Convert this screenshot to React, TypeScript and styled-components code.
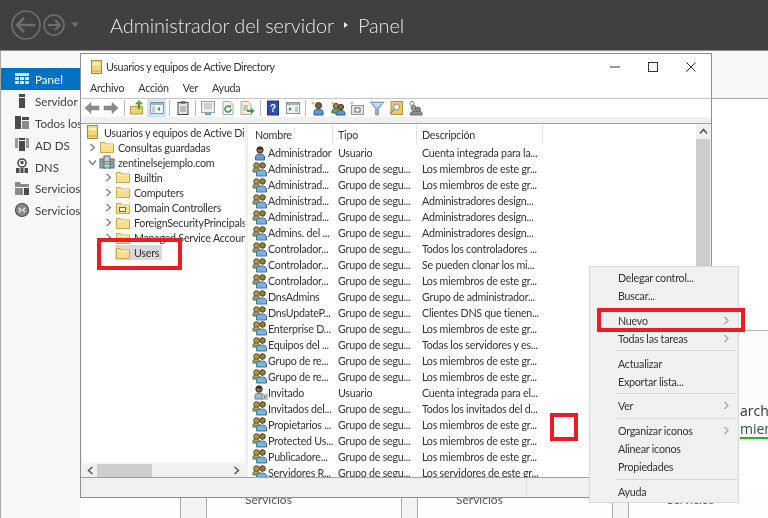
import React from "react";
import styled, { createGlobalStyle } from "styled-components";

const Global = createGlobalStyle`
  html, body { margin: 0; padding: 0; background: #fff; overflow: hidden; }
  * { box-sizing: border-box; }
`;

const UI = `"Lato", "Open Sans", sans-serif`;

const Page = styled.div`
  width: 768px;
  height: 518px;
  position: relative;
  overflow: hidden;
  background: #fff;
  font-family: ${UI};
  font-size: 10.7px;
  letter-spacing: -0.23px;
  color: #333;
  filter: blur(0.3px);
`;
const Header = styled.header`
  height: 51px;
  background: #404040;
  border-bottom: 1px solid #8c8c8c;
  display: flex;
  align-items: center;
`;
const NavSvg = styled.svg`
  flex: none;
  margin-left: 8px;
  margin-right: 26px;
`;
const Crumb = styled.div`
  display: flex;
  align-items: center;
  color: #e8e8e8;
  font-size: 20px;
  font-weight: 300;
  letter-spacing: -0.12px;
  gap: 9px;
`;
const CrumbArrow = styled.span`
  width: 0;
  height: 0;
  border-left: 4px solid #e8e8e8;
  border-top: 3.5px solid transparent;
  border-bottom: 3.5px solid transparent;
  margin-left: 1px;
  margin-right: 1px;
`;
const Body = styled.div`
  display: flex;
  height: 467px;
`;
const Sidebar = styled.nav`
  width: 80px;
  flex: none;
  background: #f8f8f8;
  border-left: 1px solid #a8a8a8;
  padding-top: 17px;
`;
const SideItem = styled.div<{ $active?: boolean }>`
  height: 21.8px;
  display: flex;
  align-items: center;
  gap: 5px;
  padding-left: 13px;
  white-space: nowrap;
  font-size: 11.6px;
  letter-spacing: 0;
  background: ${(p) => (p.$active ? "#0072c6" : "transparent")};
  color: ${(p) => (p.$active ? "#fff" : "#404040")};
  overflow: hidden;
  svg { flex: none; }
`;
const SideLabel = styled.span`
  padding-top: 2px;
`;
const Main = styled.main`
  flex: 1;
  min-width: 0;
  display: flex;
  flex-direction: column;
  overflow: hidden;
`;
const TopStrip = styled.div`
  height: 48px;
  flex: none;
  background: #f7f7f7;
  border-bottom: 1px solid #a8a8a8;
`;
const Content = styled.div`
  flex: 1;
  background: #fff;
  padding-top: 231px;
`;
const TaskPanel = styled.section`
  margin-left: auto;
  width: 200px;
  height: 112px;
  border-top: 1px solid #b5b5b5;
  background: #fbfbfb;
  padding: 71px 0 0 172px;
  font-family: "Open Sans", sans-serif;
  font-size: 14px;
  letter-spacing: 0;
  line-height: 18px;
  white-space: nowrap;
  overflow: hidden;
`;
const TaskTitle = styled.div`
  color: #333;
`;
const TaskLink = styled.div`
  color: #2c4f5a;
  border-bottom: 2px solid #1fb81f;
  height: 19px;
  width: 60px;
`;
const CardRow = styled.div`
  height: 30px;
  flex: none;
  display: flex;
  gap: 15px;
  background: #f4f4f4;
`;
const Card = styled.div<{ $w: number; $gap?: number }>`
  width: ${(p) => p.$w}px;
  flex: none;
  margin-right: ${(p) => p.$gap ?? 0}px;
  background: #fdfdfd;
  border-right: 1px solid #a8a8a8;
  border-left: ${(p) => (p.$gap ? "none" : "1px solid #a8a8a8")};
  padding: 4px 0 0 38px;
  font-size: 12px;
  letter-spacing: 0;
  line-height: 15px;
  color: #555;
`;

const Win = styled.div`
  position: absolute;
  left: 80px;
  top: 53px;
  width: 632px;
  height: 445px;
  background: #fff;
  border: 1px solid #8f8f8f;
  display: flex;
  flex-direction: column;
`;
const TitleBar = styled.div`
  height: 26px;
  flex: none;
  display: flex;
  align-items: center;
  padding-left: 8px;
  gap: 1px;
  color: #333;
`;
const TitleText = styled.div`
  flex: 1;
  padding-bottom: 1px;
  letter-spacing: -0.33px;
`;
const WinButton = styled.div`
  width: 38px;
  height: 26px;
  display: flex;
  align-items: center;
  justify-content: center;
`;
const WinButtons = styled.div`
  display: flex;
  margin-right: 1px;
`;
const MenuBar = styled.div`
  height: 19px;
  flex: none;
  display: flex;
  gap: 14px;
  padding: 0 0 3px 9px;
  align-items: center;
  border-bottom: 1px solid #c4c4c4;
  color: #333;
`;
const Toolbar = styled.div`
  height: 18px;
  flex: none;
  display: flex;
  align-items: center;
  padding-left: 1.3px;
`;
const ToolBtn = styled.div<{ $on?: boolean }>`
  width: 19.4px;
  height: 18px;
  display: flex;
  align-items: center;
  justify-content: center;
  background: ${(p) => (p.$on ? "#cce8ff" : "transparent")};
`;
const ToolSep = styled.div`
  width: 6.5px;
  height: 16px;
  display: flex;
  justify-content: center;
  &::after {
    content: "";
    width: 1px;
    background: #b8b8b8;
  }
`;
const Strip = styled.div`
  height: 7px;
  flex: none;
  background: #f0f0f0;
  border-bottom: 1px solid #a0a0a0;
`;
const Work = styled.div`
  flex: 1;
  min-height: 0;
  display: flex;
  gap: 3px;
  padding: 0 1px 0 1px;
  background: #f0f0f0;
  border-bottom: 1px solid #a0a0a0;
`;
const TreePane = styled.div`
  width: 163px;
  flex: none;
  background: #fff;
  display: flex;
  flex-direction: column;
  overflow: hidden;
`;
const Tree = styled.div`
  flex: 1;
  padding-top: 0.5px;
  overflow: hidden;
`;
const TreeRow = styled.div<{ $depth: number }>`
  height: 15.1px;
  display: flex;
  align-items: center;
  white-space: nowrap;
  padding-left: ${(p) => (p.$depth === 0 ? 3 : 3 + (p.$depth - 1) * 16)}px;
  svg { flex: none; }
`;
const Twist = styled.span`
  width: 14px;
  flex: none;
  display: flex;
  justify-content: center;
`;
const TreeEntry = styled.span<{ $sel?: boolean }>`
  display: flex;
  align-items: center;
  gap: 3px;
  height: 15px;
  padding-right: ${(p) => (p.$sel ? 3 : 0)}px;
  background: ${(p) => (p.$sel ? "#d9d9d9" : "transparent")};
`;
const HScroll = styled.div`
  height: 14px;
  flex: none;
  background: #f0f0f0;
  display: flex;
  align-items: center;
  padding-left: 5px;
`;
const HThumb = styled.div`
  width: 55px;
  height: 13px;
  margin-left: 3px;
  background: #cdcdcd;
`;
const HArrowRight = styled.div`
  margin-left: auto;
  margin-right: 5px;
  display: flex;
`;
const ListPane = styled.div`
  flex: 1;
  min-width: 0;
  background: #fff;
  display: flex;
  overflow: hidden;
`;
const ListBody = styled.div`
  flex: 1;
  min-width: 0;
  overflow: hidden;
`;
const HeaderRow = styled.div`
  height: 21px;
  display: grid;
  grid-template-columns: 85px 84px 126px;
`;
const HeadCell = styled.div<{ $first?: boolean }>`
  display: flex;
  align-items: center;
  padding-left: ${(p) => (p.$first ? 7 : 5)}px;
  border-right: 1px solid #e5e5e5;
`;
const Row = styled.div`
  height: 15.96px;
  display: grid;
  grid-template-columns: 85px 84px 1fr;
  align-items: center;
  white-space: nowrap;
`;
const NameCell = styled.div`
  display: flex;
  align-items: center;
  padding-left: 4px;
  overflow: hidden;
  svg { flex: none; }
`;
const Cell = styled.div`
  padding-left: 5px;
  overflow: hidden;
`;
const VScroll = styled.div`
  width: 14px;
  flex: none;
  background: #cdcdcd;
`;
const VButton = styled.div`
  height: 15px;
  background: #f0f0f0;
  display: flex;
  align-items: center;
  justify-content: center;
`;
const StatusBar = styled.div`
  height: 19px;
  flex: none;
  background: #f0f0f0;
  display: flex;
`;
const StatusCell = styled.div`
  width: 446px;
  border-right: 1px solid #e0e0e0;
`;
const Menu = styled.div`
  position: absolute;
  left: 589px;
  top: 266px;
  width: 150px;
  height: 237px;
  background: #f0f0f0;
  border: 1px solid #d8d8d8;
  padding: 1.4px 1px 0 2px;
  color: #333;
`;
const MenuItem = styled.div`
  height: 18.3px;
  display: flex;
  align-items: center;
  padding: 0 7px 0 26px;
  justify-content: space-between;
`;
const MenuSep = styled.div`
  height: 6.2px;
  margin-left: 24px;
  display: flex;
  align-items: center;
  &::after {
    content: "";
    flex: 1;
    height: 1px;
    background: #d7d7d7;
  }
`;
const Mark = styled.div<{ $x: number; $y: number; $w: number; $h: number }>`
  position: absolute;
  left: ${(p) => p.$x}px;
  top: ${(p) => p.$y}px;
  width: ${(p) => p.$w}px;
  height: ${(p) => p.$h}px;
  border: 4px solid #ed1c24;
`;

/* ---------- drawings ---------- */
const Svg = ({ s = 16, children }: { s?: number; children: React.ReactNode }) => (
  <svg width={s} height={s} viewBox="0 0 16 16">{children}</svg>
);
const Folder = ({ dc }: { dc?: boolean }) => (
  <Svg>
    <path d="M1.5 13.5V3.500h4l1 1.500h8v8.500z" fill="#f7dd8c" stroke="#c9a84e" />
    <path d="M2 6h12" stroke="#fff2c4" />
    {dc && <rect x="4.500" y="7.500" width="6" height="4" fill="#fff3c8" stroke="#7c6a35" />}
  </Svg>
);
const BookIcon = () => (
  <Svg>
    <rect x="2.500" y="1.500" width="10" height="13" fill="#f3d67e" stroke="#a88b3a" />
    <rect x="4" y="4" width="7" height="2" fill="#fff6d2" />
    <path d="M2.500 12h10" stroke="#c9a84e" />
  </Svg>
);
const Domain = () => (
  <Svg>
    <rect x="1" y="5" width="5" height="9" fill="#9aa4aa" stroke="#5d6a70" />
    <rect x="10" y="5" width="5" height="9" fill="#9aa4aa" stroke="#5d6a70" />
    <rect x="5" y="2" width="6" height="12" fill="#c6d0d4" stroke="#5d6a70" />
    <path d="M3 7.500h11M3 10h11" stroke="#35a653" />
  </Svg>
);
const Person = () => (
  <Svg>
    <path d="M3.500 15v-3c0-2 2-3 4.500-3s4.500 1 4.500 3v3z" fill="#6d9bc8" stroke="#3a6a98" />
    <circle cx="8" cy="5" r="3.200" fill="#8a6a3c" stroke="#3e3020" />
    <path d="M5 4.200c1-2.400 5-2.400 6 0z" fill="#2c2318" />
  </Svg>
);
const Guest = () => (
  <Svg>
    <path d="M3 15v-3.500C3 9.500 5 9 7 9s4 .5 4 2.500V15z" fill="#9db8d2" stroke="#5f7e9c" />
    <circle cx="7" cy="5" r="3.200" fill="#8a6a3c" stroke="#3e3020" />
    <path d="M4 4.200c1-2.400 5-2.400 6 0z" fill="#2c2318" />
    <rect x="10" y="11" width="5" height="4" fill="#f4f4f4" stroke="#8a8a8a" />
    <circle cx="12.500" cy="13" r="1" fill="#555" />
  </Svg>
);
const Group = () => (
  <Svg>
    <circle cx="4.500" cy="4.500" r="2.800" fill="#b3954e" stroke="#5a4722" />
    <path d="M1 11V9c0-1.500 1.500-2 3.500-2s3 .5 3 2v2z" fill="#8fa562" stroke="#5d6f3a" />
    <circle cx="10.500" cy="4.500" r="2.800" fill="#9a7a3e" stroke="#4a3a1c" />
    <path d="M4.500 15v-3c0-2.200 2.500-3 5-3s5 .8 5 3v3z" fill="#7fb0dc" stroke="#3f6f9e" />
  </Svg>
);
const Chevron = ({ open, c = "#7a7a7a" }: { open?: boolean; c?: string }) => (
  <svg width="9" height="9" viewBox="0 0 9 9">
    <path d={open ? "M1 2.500l3.500 4 3.500-4" : "M2.500 1l4 3.500-4 3.500"} fill="none" stroke={c} strokeWidth="1.200" />
  </svg>
);
const LeftCaret = () => (
  <svg width="7" height="9" viewBox="0 0 7 9"><path d="M5.500 1L1.500 4.500 5.500 8" fill="none" stroke="#555" strokeWidth="1.500" /></svg>
);
const RightCaret = () => (
  <svg width="7" height="9" viewBox="0 0 7 9"><path d="M1.500 1l4 3.500-4 3.500" fill="none" stroke="#555" strokeWidth="1.500" /></svg>
);
const UpCaret = () => (
  <svg width="9" height="7" viewBox="0 0 9 7"><path d="M1 5.500l3.500-4 3.500 4" fill="none" stroke="#555" strokeWidth="1.500" /></svg>
);
const SubArrow = () => (
  <svg width="7" height="9" viewBox="0 0 7 9"><path d="M1.500 1l3.500 3.500L1.500 8" fill="none" stroke="#666" strokeWidth="1" /></svg>
);

const Nav = () => (
  <NavSvg width="76" height="36" viewBox="0 0 76 36">
    <g fill="none" stroke="#6e6e6e" strokeWidth="1.600">
      <circle cx="18" cy="18" r="14" />
      <path d="M27 18H10M16 11l-7 7 7 7" strokeWidth="2.600" />
      <circle cx="46" cy="18" r="10" />
      <path d="M40 18h12M47 13l5 5-5 5" strokeWidth="2" />
    </g>
    <path d="M63 15.500h8l-4 4.500z" fill="#6e6e6e" />
  </NavSvg>
);

const c = "#4a4a4a";
const SideIcons: Record<string, React.ReactNode> = {
  panel: (
    <Svg>
      <path d="M1 2h14v3H1z" fill="#cfe6f7" />
      <path d="M1 6h4v3H1zM6 6h4v3H6zM11 6h4v3h-4zM1 10h4v3H1zM6 10h4v3H6zM11 10h4v3h-4z" fill="#cfe6f7" />
    </Svg>
  ),
  server: (
    <Svg>
      <rect x="5" y="1" width="6" height="3" fill={c} />
      <rect x="5" y="5" width="6" height="10" fill={c} />
    </Svg>
  ),
  all: (
    <Svg>
      <rect x="1" y="2" width="6" height="13" fill={c} />
      <rect x="8" y="3" width="7" height="3" fill={c} />
      <rect x="8" y="7" width="7" height="8" fill="#8a8a8a" />
    </Svg>
  ),
  adds: (
    <Svg>
      <rect x="1" y="2" width="3" height="10" fill="#9a9a9a" />
      <rect x="12" y="2" width="3" height="10" fill="#9a9a9a" />
      <rect x="5" y="2" width="6" height="2" fill={c} />
      <rect x="5" y="5" width="6" height="10" fill={c} />
    </Svg>
  ),
  dns: (
    <Svg>
      <circle cx="8" cy="5" r="4" fill="none" stroke={c} strokeWidth="1.600" />
      <rect x="6.500" y="3" width="3" height="3" fill={c} />
      <path d="M2 10h12v5H2z" fill={c} />
      <path d="M6 10v5M10 10v5" stroke="#f8f8f8" />
    </Svg>
  ),
  files: (
    <Svg>
      <path d="M1 2h5l1 2h8v3H1z" fill="#8a8a8a" />
      <rect x="1" y="8" width="8" height="7" fill="#8a8a8a" />
      <rect x="10" y="8" width="5" height="7" fill={c} />
    </Svg>
  ),
  iis: (
    <Svg>
      <circle cx="8" cy="8" r="6.500" fill="#8a8a8a" stroke={c} strokeWidth="1.200" />
      <path d="M5 6l2 2-2 2M11 6L9 8l2 2" fill="none" stroke="#f4f4f4" strokeWidth="1.200" />
    </Svg>
  ),
};

const tools: Array<React.ReactNode | "sep"> = [
  <Svg key="b"><path d="M1 8l6-5.500V6h8v4H7v3.500z" fill="#8c8c8c" stroke="#777" strokeWidth=".5" /></Svg>,
  <Svg key="f"><path d="M15 8L9 2.500V6H1v4h8v3.500z" fill="#8c8c8c" stroke="#777" strokeWidth=".5" /></Svg>,
  "sep",
  <Svg key="u">
    <path d="M1.500 14V6.500h12V14z" fill="#f0d078" stroke="#b5953f" />
    <path d="M9 9V4H6.500L10 .5 13.500 4H11v5z" fill="#5fae3a" stroke="#3c7c22" strokeWidth=".5" />
  </Svg>,
  <Svg key="t">
    <rect x="1.500" y="2.500" width="13" height="11" fill="#eef2f5" stroke="#8c959c" />
    <path d="M2 3h12v2H2z" fill="#a7b1b8" />
    <rect x="3" y="6.500" width="3" height="6" fill="#c2c9ce" />
    <path d="M11 7v4L8 9z" fill="#2e9a55" />
  </Svg>,
  "sep",
  <Svg key="c">
    <rect x="3" y="2.500" width="10" height="12" fill="#e9e9e9" stroke="#444" />
    <rect x="5.500" y="1" width="5" height="3" fill="#777" />
    <path d="M5 7h6M5 9h6M5 11h6" stroke="#888" />
  </Svg>,
  "sep",
  <Svg key="p">
    <rect x="1.500" y="1.500" width="13" height="11" fill="#eceff1" stroke="#9aa3a8" />
    <path d="M4 4h8M4 6h8M4 8h8" stroke="#aab2b7" />
    <path d="M5 14h6" stroke="#2f8fd8" strokeWidth="1.600" />
  </Svg>,
  <Svg key="r">
    <path d="M3 1.500h7l3 3v10H3z" fill="#f5f5f5" stroke="#aaa" />
    <path d="M11 9a3 3 0 1 1-1-2.200" fill="none" stroke="#3aa14a" strokeWidth="1.600" />
    <path d="M11 4.500v3H8z" fill="#3aa14a" />
  </Svg>,
  <Svg key="e">
    <path d="M2 1.500h7l3 3v10H2z" fill="#f6efd6" stroke="#aaa" />
    <path d="M4 6h5M4 8h5M4 10h5" stroke="#999" />
    <path d="M8 10h4V7.500l3.500 3.500-3.500 3.500V12H8z" fill="#3aa14a" />
  </Svg>,
  "sep",
  <Svg key="h">
    <rect x="2.500" y="1" width="11" height="14" fill="#2e4fae" stroke="#1c3480" />
    <text x="8" y="12" textAnchor="middle" fontSize="10" fontWeight="700" fill="#fff" fontFamily="Liberation Sans, sans-serif">?</text>
  </Svg>,
  <Svg key="v">
    <rect x="1.500" y="2.500" width="13" height="11" fill="#eef2f5" stroke="#8c959c" />
    <path d="M2 3h12v2H2z" fill="#a7b1b8" />
    <path d="M4 7v4l3-2z" fill="#2e9a55" />
    <rect x="10" y="6.500" width="3" height="6" fill="#c2c9ce" />
  </Svg>,
  "sep",
  <Svg key="nu">
    <path d="M4 15v-3c0-2 2-3 4.500-3s4.500 1 4.500 3v3z" fill="#5f95c8" stroke="#2f5d8c" />
    <circle cx="8.500" cy="5.500" r="3" fill="#7f6034" stroke="#3e3018" />
    <path d="M3 1l.7 1.800L5.500 3l-1.800.7L3 5.500 2.300 3.700.5 3l1.800-.2z" fill="#f2a531" />
  </Svg>,
  <Svg key="ng">
    <circle cx="6" cy="6" r="2.600" fill="#a98a42" stroke="#4a3a1c" />
    <path d="M2 13v-2c0-1.500 2-2.500 4-2.500s3 1 3 2.500v2z" fill="#7f9a52" stroke="#4d5f2e" />
    <circle cx="11" cy="7" r="2.600" fill="#8f6e34" stroke="#3e3018" />
    <path d="M6 15v-2c0-1.500 2.500-2.500 5-2.500s4 1 4 2.500v2z" fill="#5f95c8" stroke="#2f5d8c" />
    <path d="M3 1l.7 1.800L5.500 3l-1.800.7L3 5.500 2.300 3.700.5 3l1.800-.2z" fill="#f2a531" />
  </Svg>,
  <Svg key="ou">
    <rect x="2.500" y="5.500" width="12" height="9" fill="#e4e4de" stroke="#9a9a92" />
    <rect x="6" y="8" width="5" height="4" fill="#fafafa" stroke="#666" />
    <path d="M3 1l.7 1.800L5.500 3l-1.800.7L3 5.500 2.300 3.700.5 3l1.800-.2z" fill="#b9b9b0" />
  </Svg>,
  <Svg key="fi">
    <path d="M1 2h14L9.500 8.500V15h-3V8.500z" fill="#8eb3d2" stroke="#7d98ad" strokeWidth=".8" />
    <path d="M3 3h10L8 8z" fill="#c7dbea" />
  </Svg>,
  <Svg key="fd">
    <rect x="3" y="1.500" width="11.500" height="13" fill="#ecc869" stroke="#b5953f" />
    <circle cx="8.500" cy="7" r="3" fill="#f5f5f0" stroke="#8d8d8d" />
    <path d="M6.200 9.300L2 13.500" stroke="#8d8d8d" strokeWidth="1.600" />
  </Svg>,
  <Svg key="mv">
    <circle cx="5" cy="3.500" r="2" fill="none" stroke="#7c7c7c" />
    <circle cx="6.500" cy="8" r="2.400" fill="#9a9a9a" stroke="#666" />
    <circle cx="11" cy="9.500" r="2.400" fill="#8a8a8a" stroke="#5f5f5f" />
    <path d="M3.500 15v-2c0-1.500 6-2 10-1.500 1 .2 1.500 1 1.500 1.500v2z" fill="#8f8f8f" stroke="#666" />
  </Svg>,
];

const sep = "Grupo de segu...";
const Mem = "Los miembros de este gr...";
const Adm = "Administradores design...";
const rows: Array<[string, string, string, "u" | "g" | "i"]> = [
  ["Administrador", "Usuario", "Cuenta integrada para la...", "u"],
  ["Administrad...", sep, Mem, "g"],
  ["Administrad...", sep, Mem, "g"],
  ["Administrad...", sep, Adm, "g"],
  ["Administrad...", sep, Adm, "g"],
  ["Admins. del ...", sep, Adm, "g"],
  ["Controlador...", sep, "Todos los controladores ...", "g"],
  ["Controlador...", sep, "Se pueden clonar los mi...", "g"],
  ["Controlador...", sep, Mem, "g"],
  ["DnsAdmins", sep, "Grupo de administrador...", "g"],
  ["DnsUpdateP...", sep, "Clientes DNS que tienen...", "g"],
  ["Enterprise D...", sep, Mem, "g"],
  ["Equipos del ...", sep, "Todas los servidores y es...", "g"],
  ["Grupo de re...", sep, Mem, "g"],
  ["Grupo de re...", sep, Mem, "g"],
  ["Invitado", "Usuario", "Cuenta integrada para el...", "i"],
  ["Invitados del...", sep, "Todos los invitados del d...", "g"],
  ["Propietarios ...", sep, Mem, "g"],
  ["Protected Us...", sep, Mem, "g"],
  ["Publicadore...", sep, Mem, "g"],
  ["Servidores R...", sep, "Los servidores de este gr...", "g"],
];

const side: Array<[string, string]> = [
  ["panel", "Panel"],
  ["server", "Servidor local"],
  ["all", "Todos los servidores"],
  ["adds", "AD DS"],
  ["dns", "DNS"],
  ["files", "Servicios de archivos"],
  ["iis", "Servicios de IIS"],
];

const tree: Array<{ d: number; t: string; k: string; open?: boolean; sel?: boolean; noTwist?: boolean }> = [
  { d: 1, t: "Consultas guardadas", k: "f" },
  { d: 1, t: "zentinelsejemplo.com", k: "d", open: true },
  { d: 2, t: "Builtin", k: "f" },
  { d: 2, t: "Computers", k: "f" },
  { d: 2, t: "Domain Controllers", k: "dc" },
  { d: 2, t: "ForeignSecurityPrincipals", k: "f" },
  { d: 2, t: "Managed Service Accounts", k: "f" },
  { d: 2, t: "Users", k: "f", sel: true, noTwist: true },
];

type MI = { t: string; sub?: boolean } | "sep";
const menu: MI[] = [
  { t: "Delegar control..." },
  { t: "Buscar..." },
  "sep",
  { t: "Nuevo", sub: true },
  { t: "Todas las tareas", sub: true },
  "sep",
  { t: "Actualizar" },
  { t: "Exportar lista..." },
  "sep",
  { t: "Ver", sub: true },
  "sep",
  { t: "Organizar iconos", sub: true },
  { t: "Alinear iconos" },
  { t: "Propiedades" },
  "sep",
  { t: "Ayuda" },
];

export default function App() {
  return (
    <Page>
      <Global />
      <Header>
        <Nav />
        <Crumb>
          <span>Administrador del servidor</span>
          <CrumbArrow />
          <span>Panel</span>
        </Crumb>
      </Header>
      <Body>
        <Sidebar>
          {side.map(([k, t], i) => (
            <SideItem key={k} $active={i === 0}>
              {SideIcons[k]}
              <SideLabel>{t}</SideLabel>
            </SideItem>
          ))}
        </Sidebar>
        <Main>
          <TopStrip />
          <Content>
            <TaskPanel>
              <TaskTitle>archivos</TaskTitle>
              <TaskLink>miembros</TaskLink>
            </TaskPanel>
          </Content>
          <CardRow>
            <Card $w={101} $gap={10} />
            <Card $w={196}>Servicios</Card>
            <Card $w={196}>Servicios</Card>
            <Card $w={196}>Servicios</Card>
          </CardRow>
        </Main>
      </Body>

      <Win>
        <TitleBar>
          <BookIcon />
          <TitleText>Usuarios y equipos de Active Directory</TitleText>
          <WinButtons>
            <WinButton>
              <svg width="10" height="10" viewBox="0 0 10 10"><path d="M0 5h10" stroke="#333" /></svg>
            </WinButton>
            <WinButton>
              <svg width="10" height="10" viewBox="0 0 10 10"><rect x=".5" y=".5" width="9" height="9" fill="none" stroke="#333" /></svg>
            </WinButton>
            <WinButton>
              <svg width="10" height="10" viewBox="0 0 10 10"><path d="M.5.5l9 9M9.500.5l-9 9" stroke="#333" /></svg>
            </WinButton>
          </WinButtons>
        </TitleBar>
        <MenuBar>
          <span>Archivo</span>
          <span>Acción</span>
          <span>Ver</span>
          <span>Ayuda</span>
        </MenuBar>
        <Toolbar>
          {tools.map((t, i) =>
            t === "sep" ? <ToolSep key={i} /> : <ToolBtn key={i} $on={i === 4}>{t}</ToolBtn>
          )}
        </Toolbar>
        <Strip />
        <Work>
          <TreePane>
            <Tree>
              <TreeRow $depth={0}>
                <TreeEntry>
                  <BookIcon />
                  <span>Usuarios y equipos de Active Directory</span>
                </TreeEntry>
              </TreeRow>
              {tree.map((n) => (
                <TreeRow key={n.t} $depth={n.d}>
                  <Twist>{!n.noTwist && <Chevron open={n.open} />}</Twist>
                  <TreeEntry $sel={n.sel}>
                    {n.k === "d" ? <Domain /> : <Folder dc={n.k === "dc"} />}
                    <span>{n.t}</span>
                  </TreeEntry>
                </TreeRow>
              ))}
            </Tree>
            <HScroll>
              <LeftCaret />
              <HThumb />
              <HArrowRight><RightCaret /></HArrowRight>
            </HScroll>
          </TreePane>
          <ListPane>
            <ListBody>
              <HeaderRow>
                <HeadCell $first>Nombre</HeadCell>
                <HeadCell>Tipo</HeadCell>
                <HeadCell>Descripción</HeadCell>
              </HeaderRow>
              {rows.map((r, i) => (
                <Row key={i}>
                  <NameCell>
                    {r[3] === "u" ? <Person /> : r[3] === "i" ? <Guest /> : <Group />}
                    <span>{r[0]}</span>
                  </NameCell>
                  <Cell>{r[1]}</Cell>
                  <Cell>{r[2]}</Cell>
                </Row>
              ))}
            </ListBody>
            <VScroll>
              <VButton><UpCaret /></VButton>
            </VScroll>
          </ListPane>
        </Work>
        <StatusBar>
          <StatusCell />
        </StatusBar>
      </Win>

      <Menu>
        {menu.map((m, i) =>
          m === "sep" ? (
            <MenuSep key={i} />
          ) : (
            <MenuItem key={i}>
              <span>{m.t}</span>
              {m.sub && <SubArrow />}
            </MenuItem>
          )
        )}
      </Menu>

      <Mark $x={97} $y={238} $w={85} $h={32} />
      <Mark $x={597} $y={308} $w={148} $h={24} />
      <Mark $x={550} $y={413} $w={28} $h={28} />
    </Page>
  );
}
